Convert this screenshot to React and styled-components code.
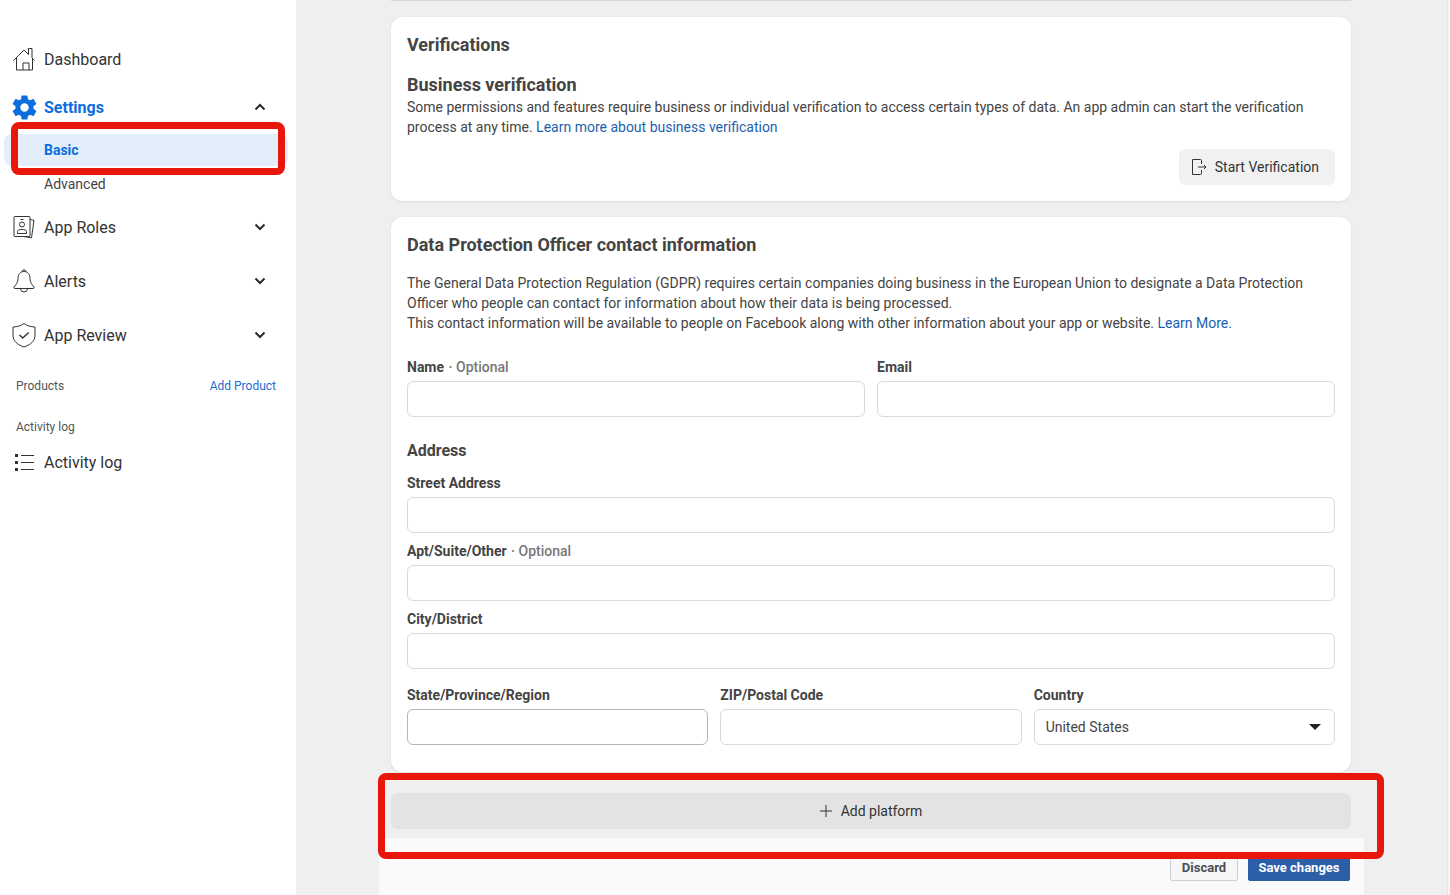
import React from 'react'
import styled, { createGlobalStyle } from 'styled-components'

const GlobalStyle = createGlobalStyle`
  html, body {
    margin: 0;
    padding: 0;
    height: 895px;
    overflow: hidden;
    background: #efefef;
    font-family: Roboto, "Liberation Sans", sans-serif;
    color: #333333;
  }
  * { box-sizing: border-box; }
`

const Page = styled.div`
  position: relative;
  display: flex;
  width: 1450px;
  height: 895px;
  overflow: hidden;
`

const Sidebar = styled.aside`
  flex: 0 0 296px;
  background: #fff;
  padding: 35px 0 0 4px;
`

const NavRow = styled.div`
  display: flex;
  align-items: center;
  height: ${p => p.$h || 48}px;
  margin-top: ${p => p.$mt || 0}px;
  padding: 0 30px 0 8px;
  font-size: 16px;
  font-weight: ${p => (p.$active ? 700 : 400)};
  color: ${p => (p.$active ? '#0a6ee0' : '#333')};
`

const NavIcon = styled.span`
  display: flex;
  justify-content: center;
  width: 24px;
  min-width: 0;
  flex: 0 0 24px;
  margin-right: 8px;

  svg {
    flex-shrink: 0;
  }
`

const Chevron = styled.svg`
  margin-left: auto;
  width: 12px;
  height: 8px;
  fill: none;
  stroke: #2b2b2b;
  stroke-width: 2;
`

const SubItem = styled.div`
  display: flex;
  align-items: center;
  width: 284px;
  height: 32px;
  margin-top: ${p => p.$mt || 0}px;
  padding-left: 40px;
  border-radius: 8px;
  font-size: 14px;
  font-weight: ${p => (p.$active ? 700 : 400)};
  color: ${p => (p.$active ? '#0a6ee0' : '#444')};
  background: ${p => (p.$active ? '#e3eefa' : 'transparent')};
`

const SideHead = styled.div`
  display: flex;
  justify-content: space-between;
  align-items: center;
  height: 20px;
  margin-top: ${p => p.$mt}px;
  padding: 0 20px 0 12px;
  font-size: 12px;
  color: #555;
`

const SideLink = styled.span`
  color: #1c6dd0;
`

const Main = styled.main`
  flex: 0 0 960px;
  margin-left: 95px;
`

const TopLine = styled.div`
  height: 1px;
  background: #d4d6da;
  margin-bottom: 16px;
`

const Card = styled.section`
  background: #fff;
  border-radius: 12px;
  box-shadow: 0 1px 3px rgba(0, 0, 0, 0.08);
  padding: 16px 16px ${p => p.$pb || 16}px;
  margin-bottom: ${p => p.$mb ?? 16}px;
`

const CardTitle = styled.h2`
  margin: 0;
  font-size: 18px;
  line-height: 24px;
  font-weight: 700;
  color: #444;
`

const SubTitle = styled.h3`
  margin: ${p => p.$mt || 0}px 0 ${p => p.$mb || 0}px;
  font-size: ${p => p.$size || 18}px;
  line-height: 24px;
  font-weight: 700;
  color: #444;
`

const Text = styled.p`
  margin: ${p => p.$mt || 0}px 0 0;
  font-size: 14px;
  line-height: 20px;
  color: #444;
`

const Link = styled.a`
  color: #1c5fb0;
`

const ButtonRow = styled.div`
  display: flex;
  justify-content: flex-end;
  margin-top: 12px;
`

const GreyButton = styled.button`
  display: flex;
  align-items: center;
  gap: 8px;
  height: 36px;
  padding: 0 16px 0 12px;
  border: 0;
  border-radius: 6px;
  background: #f1f1f1;
  font: 400 14px Roboto, sans-serif;
  color: #333;
`

const Fields = styled.div`
  display: grid;
  grid-template-columns: repeat(${p => p.$cols || 1}, 1fr);
  gap: 12px;
  margin-top: ${p => p.$mt || 0}px;
`

const Field = styled.div`
  display: flex;
  flex-direction: column;
`

const Label = styled.label`
  height: 20px;
  margin-bottom: 4px;
  font-size: 14px;
  line-height: 20px;
  font-weight: 700;
  color: #444;
`

const Optional = styled.span`
  margin-left: 1px;
  font-weight: 500;
  color: #777;
`

const Input = styled.input`
  height: 36px;
  width: 100%;
  border: 1px solid ${p => (p.$focused ? '#b5b5b5' : '#dadada')};
  border-radius: 6px;
  background: #fff;
`

const SelectBox = styled.div`
  display: flex;
  align-items: center;
  justify-content: space-between;
  height: 36px;
  padding: 0 13px 0 11px;
  border: 1px solid #dadada;
  border-radius: 6px;
  font-size: 14px;
  color: #444;
`

const Caret = styled.span`
  width: 0;
  height: 0;
  border-left: 6px solid transparent;
  border-right: 6px solid transparent;
  border-top: 6px solid #222;
`

const AddPlatform = styled.button`
  display: flex;
  align-items: center;
  justify-content: center;
  gap: 9px;
  width: 100%;
  height: 36px;
  margin-top: 21px;
  border: 0;
  border-radius: 6px;
  background: #e3e3e3;
  font: 400 14px Roboto, sans-serif;
  color: #333;
`

const SaveBar = styled.div`
  display: flex;
  justify-content: flex-end;
  align-items: flex-start;
  gap: 10px;
  height: 57px;
  margin: 9px -13px 0 -12px;
  padding: 15px 14px 0 0;
  background: #fafafa;
  border-radius: 4px 4px 0 0;
`

const BarButton = styled.button`
  width: ${p => (p.$primary ? 102 : 68)}px;
  height: 28px;
  padding: 0;
  border: 1px solid ${p => (p.$primary ? '#2d5ea8' : '#ced0d4')};
  border-radius: 2px;
  background: ${p => (p.$primary ? '#2d5ea8' : '#f5f6f7')};
  font: 700 13px Roboto, sans-serif;
  color: ${p => (p.$primary ? '#fff' : '#4b4f56')};
`

const ScrollEdge = styled.div`
  margin-left: auto;
  flex: 0 0 3px;
  background: #f5f5f5;
  border-left: 1px solid #e6e6e6;
`

const RedBox = styled.div`
  position: absolute;
  left: ${p => p.$x}px;
  top: ${p => p.$y}px;
  width: ${p => p.$w}px;
  height: ${p => p.$h}px;
  border: 7px solid #e8170b;
  border-radius: 8px;
  pointer-events: none;
`

const Line = { fill: 'none', stroke: '#333', strokeWidth: 1 }

const HomeIcon = () => (
  <svg width="24" height="24" viewBox="0 0 24 24" {...Line}>
    <path d="M1.500 13.500 12 3l4.500 4.500V1.500h3.500V11l2.500 2.500" />
    <path d="M4.500 11v12h16V11" />
    <path d="M11 23v-7h6v7" />
  </svg>
)

const GearIcon = () => (
  <svg width="29" height="29" viewBox="0 0 24 24" fill="#0a6ee0">
    <path d="M19.430 12.980c.04-.32.070-.64.070-.98s-.030-.66-.070-.98l2.110-1.650a.5.500 0 0 0 .12-.64l-2-3.460a.5.500 0 0 0-.61-.22l-2.490 1a7.300 7.300 0 0 0-1.690-.98l-.38-2.650A.49.490 0 0 0 14 2h-4a.49.490 0 0 0-.49.420l-.38 2.650c-.61.250-1.170.59-1.690.98l-2.490-1a.5.500 0 0 0-.61.220l-2 3.460a.49.490 0 0 0 .12.640l2.110 1.650c-.04.320-.070.650-.070.980s.030.660.070.980l-2.110 1.650a.5.500 0 0 0-.12.640l2 3.460c.12.220.39.300.61.220l2.490-1c.52.400 1.080.73 1.690.98l.38 2.650c.03.240.24.420.49.420h4c.25 0 .46-.18.49-.42l.38-2.650c.61-.25 1.170-.59 1.690-.98l2.490 1c.23.090.49 0 .61-.22l2-3.460a.5.500 0 0 0-.12-.64zM12 15.500a3.500 3.500 0 1 1 0-7 3.500 3.500 0 0 1 0 7z" />
  </svg>
)

const RolesIcon = () => (
  <svg width="24" height="24" viewBox="0 0 24 24" {...Line}>
    <rect x="2" y="1.500" width="16" height="20" rx="1" />
    <path d="M18 4.500l4 .8-2.500 17.500-8-1.300" />
    <circle cx="10" cy="9.500" r="2.500" />
    <path d="M5.500 18.500v-2c0-1.500 2-2 4.500-2s4.500.5 4.500 2v2z" />
    <path d="M8.500 4.500h3" />
  </svg>
)

const BellIcon = () => (
  <svg width="24" height="26" viewBox="0 0 24 26" {...Line}>
    <path d="M12 3.500c-4 0-6 3-6 7 0 4-2 6-4 8.500-.5.800 0 1.500 1 1.500h18c1 0 1.500-.7 1-1.500-2-2.500-4-4.500-4-8.500 0-4-2-7-6-7z" />
    <path d="M10 3.800a2 2 0 0 1 4 0" />
    <path d="M8.500 20.500a3.500 3.500 0 0 0 7 0" />
  </svg>
)

const ShieldIcon = () => (
  <svg width="26" height="26" viewBox="0 0 26 26" {...Line}>
    <path d="M13 1.500c3 2.200 6.500 3.300 11 3.500v8c0 6-4 9.500-11 12C6 22.500 2 19 2 13V5c4.500-.2 8-1.300 11-3.500z" />
    <path d="M8.500 13l3.200 3 6-5.500" strokeWidth="1.500" />
  </svg>
)

const ListIcon = () => (
  <svg width="20" height="18" viewBox="0 0 20 18">
    <g fill="#333">
      <rect x="1" y="1" width="3" height="3" />
      <rect x="1" y="8" width="3" height="3" />
      <rect x="1" y="15" width="3" height="3" />
      <rect x="7" y="2" width="13" height="1" />
      <rect x="7" y="9" width="13" height="1" />
      <rect x="7" y="16" width="13" height="1" />
    </g>
  </svg>
)

const ExitIcon = () => (
  <svg width="16" height="16" viewBox="0 0 16 16" {...Line}>
    <path d="M10.500 5V1.500a1 1 0 0 0-1-1h-8v15h8a1 1 0 0 0 1-1V11" />
    <path d="M7 8h8M13 6l2 2-2 2" />
  </svg>
)

const PlusIcon = () => (
  <svg width="12" height="12" viewBox="0 0 12 12" {...Line}>
    <path d="M6 0v12M0 6h12" />
  </svg>
)

const ChevronIcon = ({ up }) => (
  <Chevron viewBox="0 0 12 8">
    <path d={up ? 'M1.500 6.500 6 2l4.500 4.500' : 'M1.500 1.500 6 6l4.500-4.500'} />
  </Chevron>
)

const TextField = ({ label, optional, focused }) => (
  <Field>
    <Label>
      {label}
      {optional && <Optional> · Optional</Optional>}
    </Label>
    <Input $focused={focused} />
  </Field>
)

export default function App() {
  return (
    <Page>
      <GlobalStyle />
      <Sidebar>
        <NavRow>
          <NavIcon><HomeIcon /></NavIcon>Dashboard
        </NavRow>
        <NavRow $active>
          <NavIcon><GearIcon /></NavIcon>Settings<ChevronIcon up />
        </NavRow>
        <SubItem $active $mt={3}>Basic</SubItem>
        <SubItem $mt={2}>Advanced</SubItem>
        <NavRow $h={54}>
          <NavIcon><RolesIcon /></NavIcon>App Roles<ChevronIcon />
        </NavRow>
        <NavRow $h={54}>
          <NavIcon><BellIcon /></NavIcon>Alerts<ChevronIcon />
        </NavRow>
        <NavRow $h={54}>
          <NavIcon><ShieldIcon /></NavIcon>App Review<ChevronIcon />
        </NavRow>
        <SideHead $mt={14}>
          <span>Products</span>
          <SideLink>Add Product</SideLink>
        </SideHead>
        <SideHead $mt={21}>
          <span>Activity log</span>
        </SideHead>
        <NavRow $h={40} $mt={5}>
          <NavIcon><ListIcon /></NavIcon>Activity log
        </NavRow>
      </Sidebar>

      <Main>
        <TopLine />
        <Card>
          <CardTitle>Verifications</CardTitle>
          <SubTitle $mt={16}>Business verification</SubTitle>
          <Text>
            Some permissions and features require business or individual verification to access certain types of data. An app admin can start the verification process at any time.{' '}
            <Link>Learn more about business verification</Link>
          </Text>
          <ButtonRow>
            <GreyButton><ExitIcon />Start Verification</GreyButton>
          </ButtonRow>
        </Card>

        <Card $mb={0} $pb={27}>
          <CardTitle>Data Protection Officer contact information</CardTitle>
          <Text $mt={16}>
            The General Data Protection Regulation (GDPR) requires certain companies doing business in the European Union to designate a Data Protection Officer who people can contact for information about how their data is being processed.
            <br />
            This contact information will be available to people on Facebook along with other information about your app or website. <Link>Learn More.</Link>
          </Text>
          <Fields $cols={2} $mt={24}>
            <TextField label="Name" optional />
            <TextField label="Email" />
          </Fields>
          <SubTitle $size={16} $mt={22} $mb={10}>Address</SubTitle>
          <TextField label="Street Address" />
          <Fields $mt={8}>
            <TextField label="Apt/Suite/Other" optional />
          </Fields>
          <Fields $mt={8}>
            <TextField label="City/District" />
          </Fields>
          <Fields $cols={3} $mt={16}>
            <TextField label="State/Province/Region" focused />
            <TextField label="ZIP/Postal Code" />
            <Field>
              <Label>Country</Label>
              <SelectBox>United States<Caret /></SelectBox>
            </Field>
          </Fields>
        </Card>

        <AddPlatform><PlusIcon />Add platform</AddPlatform>
        <SaveBar>
          <BarButton>Discard</BarButton>
          <BarButton $primary>Save changes</BarButton>
        </SaveBar>
      </Main>
      <ScrollEdge />

      <RedBox $x={11} $y={122} $w={274} $h={53} />
      <RedBox $x={378} $y={773} $w={1006} $h={86} />
    </Page>
  )
}
